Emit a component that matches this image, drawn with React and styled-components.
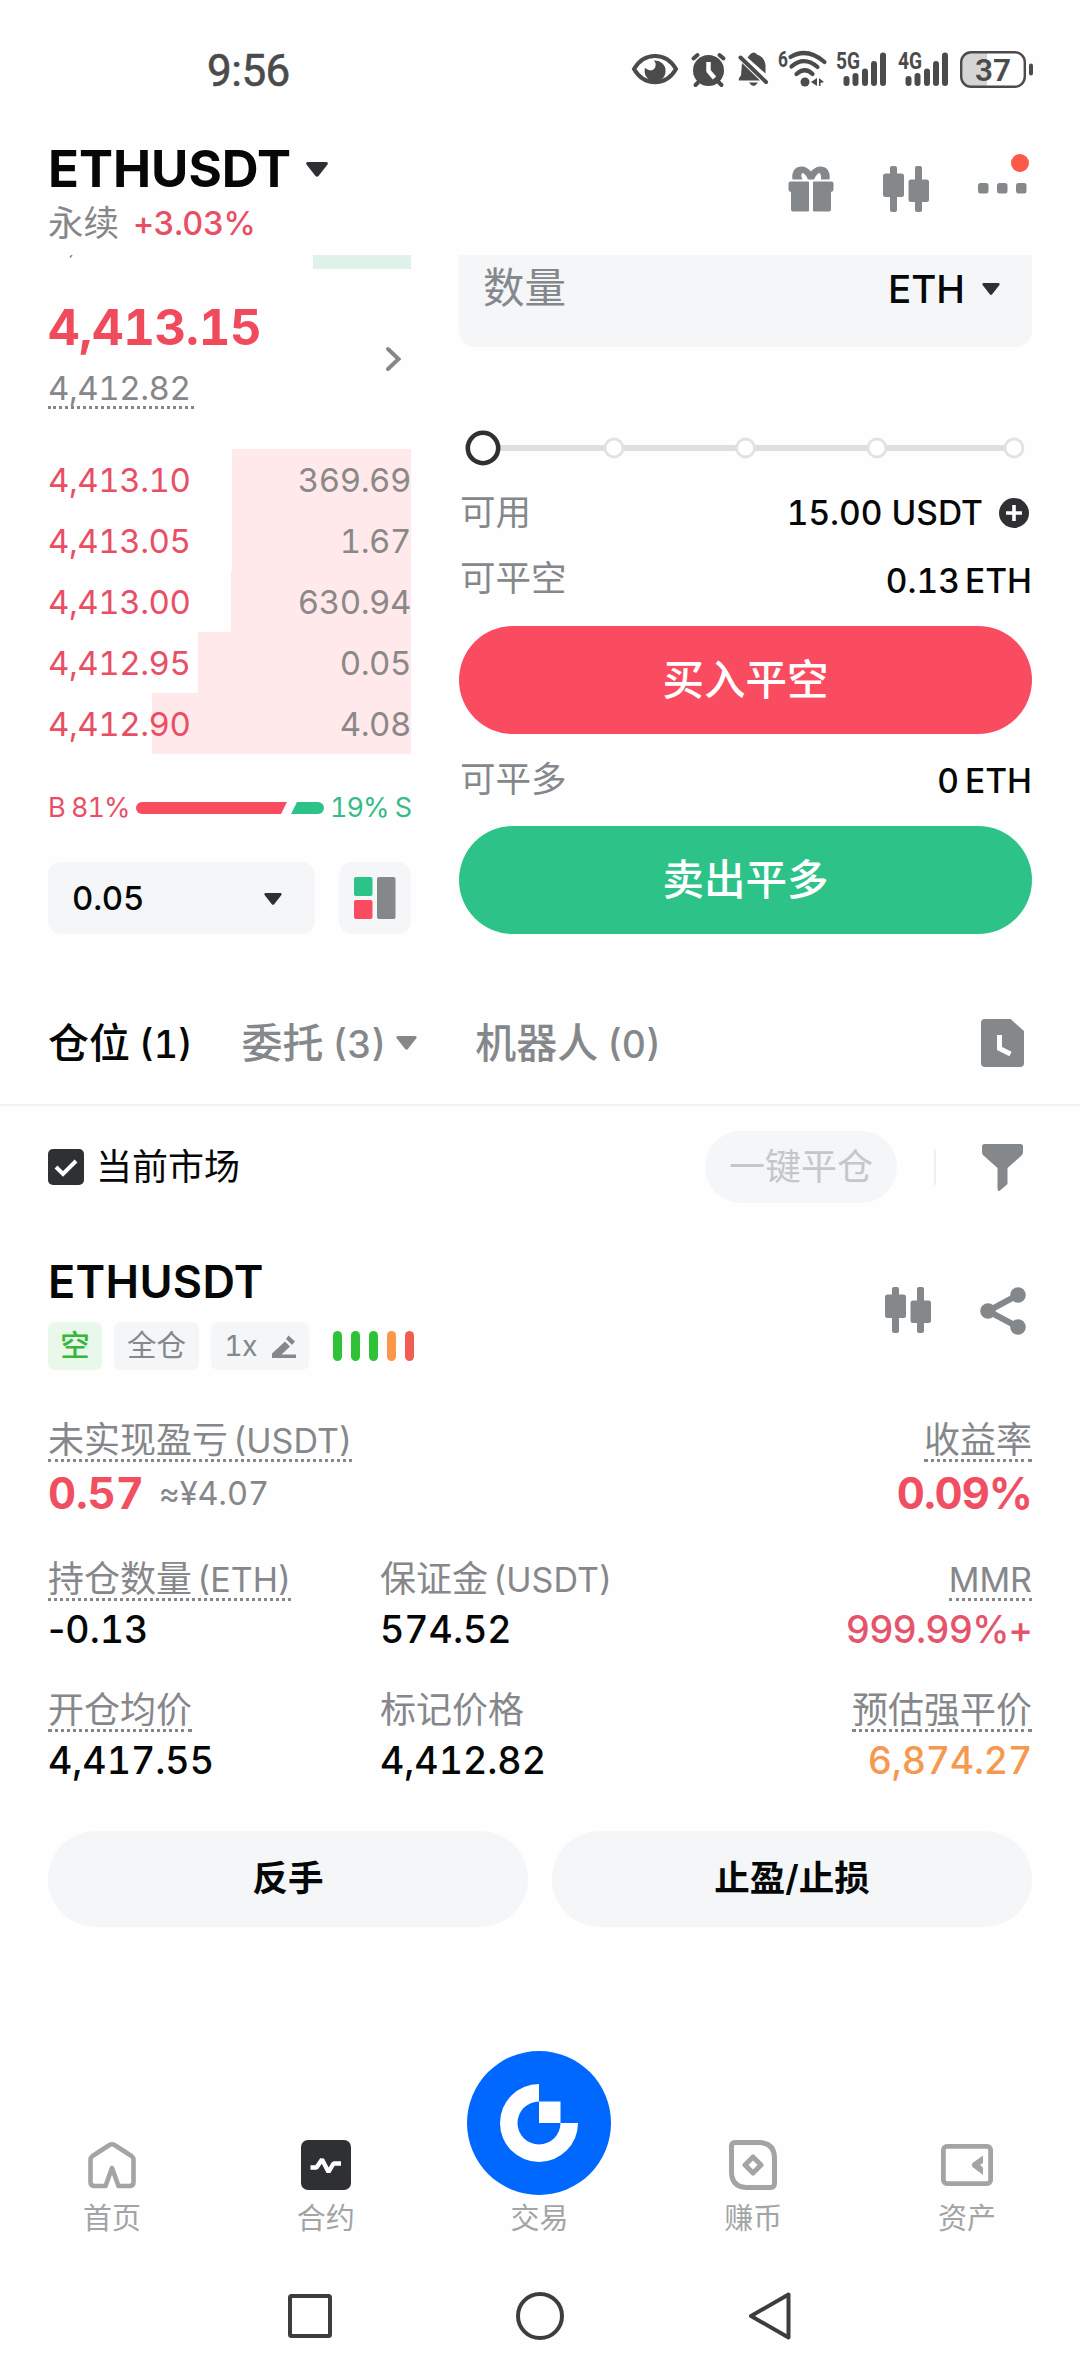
import React from "react";
import styled, { createGlobalStyle } from "styled-components";

const c = {
  red: "#f94c60",
  redText: "#e94f64",
  green: "#2dc388",
  gray: "#85888b",
  grayText: "#85878a",
  dark: "#2f3033",
  panel: "#f4f6f8",
  status: "#4b4b4b",
  nav: "#a2a4a6",
};

const Global = createGlobalStyle`
  * { box-sizing: border-box; }
  body { margin: 0; background: #fefefe; }
`;

const Screen = styled.div`
  width: 1080px;
  height: 2376px;
  display: flex;
  flex-direction: column;
  overflow: hidden;
  background: #fefefe;
  color: #060707;
  font-family: Inter, "Noto Sans CJK SC", sans-serif;
  font-variant-numeric: tabular-nums;
  line-height: 1.2;
  white-space: nowrap;
`;

/* ---------- status bar ---------- */
const StatusBar = styled.div`
  height: 138px;
  padding: 0 47px 0 207px;
  display: flex;
  align-items: center;
  justify-content: space-between;
  color: ${c.status};
`;
const Clock = styled.div`
  font: 400 44px/50px Roboto, sans-serif;
  letter-spacing: -0.5px;
  padding-top: 4px;
  -webkit-text-stroke: 0.6px ${c.status};
`;
const StatusIcons = styled.div`
  display: flex;
  align-items: center;
  svg { display: block; overflow: visible; }
`;
const Gap = styled.span`
  width: ${(p) => p.$w}px;
`;

/* ---------- header ---------- */
const Header = styled.header`
  height: 117px;
  padding: 4px 48px 0;
  display: flex;
  justify-content: space-between;
`;
const Stack = styled.div`
  display: flex;
  flex-direction: column;
  gap: ${(p) => p.$gap || 0}px;
`;
const Pair = styled.div`
  display: flex;
  align-items: center;
  height: 54px;
  gap: 15px;
`;
const Symbol = styled.h1`
  margin: 0;
  font-size: 51px;
  line-height: 54px;
  font-weight: 700;
`;
const Change = styled.div`
  display: flex;
  align-items: center;
  gap: 14px;
  height: 40px;
  font-size: 35.5px;
  color: ${c.grayText};
`;
const Contract = styled.span`
  padding-top: 2px;
`;
const Percent = styled.span`
  font-size: 32.5px;
  font-weight: 500;
  letter-spacing: -0.5px;
  color: ${c.redText};
`;
const HeaderIcons = styled.div`
  display: flex;
  align-items: flex-start;
  svg { display: block; }
`;

/* ---------- trade area ---------- */
const Trade = styled.section`
  display: grid;
  grid-template-columns: 363px 573px;
  gap: 48px;
  padding: 0 48px;
  height: 679px;
`;
const Column = styled.div`
  display: flex;
  flex-direction: column;
`;
const ClippedRow = styled.div`
  height: 14px;
  display: flex;
  justify-content: space-between;
  align-items: flex-start;
`;
const BidDepth = styled.div`
  width: 98px;
  height: 14px;
  background: #e0f3ea;
`;
const PriceRow = styled.div`
  height: 180px;
  display: flex;
  justify-content: space-between;
  align-items: center;
  padding-right: 9px;
`;
const PriceStack = styled.div`
  align-self: flex-start;
  padding-top: 34px;
  display: flex;
  flex-direction: column;
  align-items: flex-start;
  gap: 18px;
`;
const LastPrice = styled.div`
  font-size: 49px;
  line-height: 50px;
  font-weight: 700;
  letter-spacing: -0.4px;
  color: #f04a5d;
`;
const MarkPrice = styled.div`
  font-size: 33px;
  line-height: 35px;
  letter-spacing: -0.45px;
  color: ${c.grayText};
  border-bottom: 3px dotted ${c.gray};
  padding-right: 3px;
`;
const BookRow = styled.div`
  height: 61px;
  padding-top: 2px;
  display: flex;
  justify-content: space-between;
  align-items: center;
  font-size: 33px;
  letter-spacing: -0.45px;
  background: linear-gradient(#ffe9ea, #ffe9ea) right / ${(p) => p.$depth}px 100% no-repeat;
`;
const AskPrice = styled.span`
  color: ${c.redText};
`;
const Amount = styled.span`
  color: #8a8889;
`;
const Ratio = styled.div`
  height: 108px;
  display: flex;
  align-items: center;
  justify-content: space-between;
  font-size: 27px;
  svg { display: block; }
`;
const RatioText = styled.span`
  color: ${(p) => p.$color};
  letter-spacing: -1px;
`;
const Controls = styled.div`
  display: flex;
  justify-content: space-between;
  height: 72px;
`;
const Select = styled.div`
  width: 267px;
  padding: 2px 33px 0 24px;
  border-radius: 13px;
  background: ${c.panel};
  display: flex;
  align-items: center;
  justify-content: space-between;
  font-size: 33px;
  letter-spacing: -0.2px;
  font-weight: 500;
`;
const SquareButton = styled.div`
  width: 72px;
  border-radius: 13px;
  background: ${c.panel};
  display: flex;
  align-items: center;
  justify-content: center;
`;
const QtyInput = styled.div`
  height: 92px;
  padding: 0 32px 24px 24px;
  border-radius: 0 0 16px 16px;
  background: ${c.panel};
  display: flex;
  align-items: center;
  justify-content: space-between;
  font-size: 41.5px;
  color: ${c.gray};
`;
const Unit = styled.span`
  display: flex;
  align-items: center;
  gap: 17px;
  font-size: 38.5px;
  font-weight: 500;
  color: #060707;
`;
const SliderWrap = styled.div`
  height: 133px;
  padding: 83px 0 14px;
  svg { display: block; }
`;
const InfoRow = styled.div`
  height: ${(p) => p.$h}px;
  padding-left: 1px;
  display: flex;
  align-items: center;
  justify-content: space-between;
  font-size: 35.5px;
  color: ${c.gray};
`;
const InfoValue = styled.span`
  display: flex;
  align-items: center;
  gap: 16px;
  padding-top: ${(p) => p.$drop || 0}px;
  padding-right: ${(p) => p.$pad || 0}px;
  font-size: 33.5px;
  font-weight: 500;
  word-spacing: ${(p) => p.$ws || 0}px;
  color: #060707;
`;
const OrderButton = styled.div`
  height: 108px;
  padding-top: 1px;
  border-radius: 54px;
  margin-top: ${(p) => p.$mt || 0}px;
  background: ${(p) => p.$bg};
  color: #fff;
  font-size: 41.5px;
  font-weight: 500;
  display: flex;
  align-items: center;
  justify-content: center;
`;

/* ---------- tabs ---------- */
const Tabs = styled.nav`
  margin-top: 48px;
  height: 124px;
  padding: 0 48px;
  border-bottom: 2px solid #f1f2f3;
  display: flex;
  align-items: center;
`;
const Tab = styled.div`
  display: flex;
  align-items: baseline;
  gap: 9px;
  padding-top: 1px;
  margin-right: ${(p) => p.$mr || 0}px;
  font-size: 41px;
  font-weight: 500;
  color: ${(p) => (p.$active ? "#060707" : c.gray)};
`;
const Count = styled.span`
  font-size: 37.5px;
`;
const Push = styled.span`
  flex: 1;
`;
const FilterRow = styled.div`
  height: 122px;
  padding: 0 57px 0 48px;
  display: flex;
  align-items: center;
`;
const CheckLabel = styled.span`
  margin-left: 12px;
  padding-top: 2px;
  font-size: 36px;
`;
const CloseAll = styled.div`
  width: 192px;
  height: 72px;
  padding-top: 2px;
  border-radius: 36px;
  background: ${c.panel};
  color: #c3c7ca;
  font-size: 36px;
  display: flex;
  align-items: center;
  justify-content: center;
`;
const Separator = styled.span`
  width: 2px;
  height: 36px;
  margin: 0 46px 0 37px;
  background: #eef0f1;
`;

/* ---------- position ---------- */
const Position = styled.section`
  padding: 30px 48px 0;
`;
const PositionHead = styled.div`
  display: flex;
  justify-content: space-between;
`;
const PositionName = styled.h2`
  margin: 0;
  font-size: 45px;
  line-height: 48px;
  font-weight: 600;
  letter-spacing: 0.3px;
`;
const Tags = styled.div`
  display: flex;
  align-items: center;
  gap: 12px;
`;
const Tag = styled.span`
  width: ${(p) => p.$w}px;
  height: 48px;
  border-radius: 7px;
  display: flex;
  align-items: center;
  justify-content: center;
  gap: 15px;
  font-size: ${(p) => p.$fs || 29.5}px;
  letter-spacing: ${(p) => p.$ls || 0}px;
  font-weight: ${(p) => (p.$short ? 500 : 400)};
  color: ${(p) => (p.$short ? "#35b83c" : c.gray)};
  background: ${(p) => (p.$short ? "#e9f8ea" : c.panel)};
`;
const Levels = styled.span`
  display: flex;
  gap: 9px;
  margin-left: 12px;
`;
const Level = styled.i`
  width: 9px;
  height: 30px;
  border-radius: 5px;
  background: ${(p) => p.$color};
`;
const PositionIcons = styled.div`
  display: flex;
  gap: 49px;
  padding: 29px 6px 0 0;
  svg { display: block; }
`;
const Metrics = styled.div`
  display: grid;
  grid-template-columns: 332px 1fr auto;
  margin-top: ${(p) => p.$mt}px;
`;
const Metric = styled.div`
  display: flex;
  flex-direction: column;
  align-items: ${(p) => (p.$right ? "flex-end" : "flex-start")};
  gap: ${(p) => p.$gap || 6}px;
`;
const Label = styled.div`
  display: flex;
  align-items: baseline;
  gap: 5px;
  height: 42px;
  line-height: 41px;
  font-size: 36px;
  color: ${c.grayText};
  border-bottom: 3px dotted ${(p) => (p.$plain ? "transparent" : c.gray)};
`;
const LabelUnit = styled.span`
  font-size: 34px;
`;
const Value = styled.div`
  height: 44px;
  display: flex;
  align-items: center;
  gap: 15px;
  font-size: ${(p) => (p.$big ? 43.5 : 37.5)}px;
  font-weight: ${(p) => (p.$big ? 700 : 500)};
  letter-spacing: ${(p) => p.$ls || 0}px;
  color: ${(p) => p.$color || "#060707"};
`;
const Minus = styled.span`
  font-variant-numeric: normal;
  margin-right: -15px;
`;
const Approx = styled.span`
  font-size: 32.5px;
  font-weight: 400;
  color: ${c.grayText};
`;
const Actions = styled.div`
  display: grid;
  grid-template-columns: 1fr 1fr;
  gap: 24px;
  margin-top: 49px;
`;
const Action = styled.div`
  height: 96px;
  padding-top: 1px;
  border-radius: 48px;
  background: ${c.panel};
  display: flex;
  align-items: center;
  justify-content: center;
  font-size: 35.5px;
  font-weight: 600;
`;

/* ---------- bottom ---------- */
const TabBar = styled.nav`
  display: grid;
  grid-template-columns: repeat(5, 1fr);
  align-items: end;
  padding: 0 6px 0 5px;
`;
const NavItem = styled.div`
  display: flex;
  flex-direction: column;
  align-items: center;
  font-size: 29px;
  line-height: 44px;
  color: ${c.nav};
  svg { display: block; margin-bottom: ${(p) => (p.$main ? 2 : 7)}px; }
`;
const SystemNav = styled.div`
  height: 135px;
  padding: 15px 1px 0 0;
  display: flex;
  justify-content: center;
  align-items: center;
  gap: 180px;
`;

/* ---------- icons ---------- */
const Caret = ({ w, h, color = c.dark }) => (
  <svg width={w} height={h} viewBox="0 0 22 15">
    <path d="M1.5 0h19q2 .5 1 2.500l-9 11.500q-1.500 1.500-3 0l-9-11.500q-1-2 1-2.500z" fill={color} />
  </svg>
);
const EyeIcon = () => (
  <svg width="46" height="32" viewBox="0 0 46 32">
    <path d="M2 16C12-1.500 34-1.500 44 16 34 33.500 12 33.500 2 16z" fill="none" stroke={c.status} strokeWidth="4" />
    <path d="M22 7.500a10.500 10.500 0 1 1-9 7.500q6 4.500 9.500.5 2.500-4-.5-8z" fill={c.status} />
  </svg>
);
const AlarmIcon = () => (
  <svg width="35" height="35" viewBox="0 0 35 35" fill="none" stroke={c.status} strokeWidth="4" strokeLinecap="round">
    <circle cx="17.500" cy="18.500" r="15.500" fill={c.status} stroke="none" />
    <path d="M2.500 6.500 6.500 3M32.500 6.500 28.500 3M7 30.500 4.500 33M28 30.500 30.500 33" />
    <path d="M17.500 10v9l6 7" stroke="#fefefe" strokeWidth="4.500" strokeLinecap="butt" strokeLinejoin="round" />
  </svg>
);
const MutedBellIcon = () => (
  <svg width="30" height="35" viewBox="0 0 30 35">
    <path d="M12 2.500q4-4 7 0 8 3 8.500 11v8L9.500 5.500z" fill={c.status} />
    <path d="M4 11 22 28.500H1q-1-2 2-5z" fill={c.status} />
    <path d="M11 30.500h9q-4.500 7-9 0z" fill={c.status} />
    <path d="M2.500 5.500 28 30" stroke={c.status} strokeWidth="4" strokeLinecap="round" />
  </svg>
);
const WifiIcon = () => (
  <svg width="49" height="36" viewBox="0 0 49 36" fill="none" stroke={c.status} strokeWidth="4.200">
    <text x="0" y="16" fontFamily="Roboto, sans-serif" fontSize="22" fontWeight="700" fill={c.status} stroke="none" textLength="10" lengthAdjust="spacingAndGlyphs">6</text>
    <path d="M12.500 6Q29-4 46.500 11" strokeLinecap="round" />
    <path d="M13.500 15.500Q26 4.500 39.500 16" strokeLinecap="round" />
    <path d="M18.500 23Q27 15.500 34.500 23" strokeLinecap="round" />
    <circle cx="27" cy="31" r="4.500" fill={c.status} stroke="none" />
    <path d="M39 27v8l-6-4zM41 27l5 4-3.500 1V35H41z" fill={c.status} stroke="none" />
  </svg>
);
const SignalIcon = ({ label }) => (
  <svg width="50" height="36" viewBox="0 0 50 36">
    <text x="0" y="17.500" fontFamily="Roboto, sans-serif" fontSize="23" fontWeight="700" fill={c.status} textLength="24" lengthAdjust="spacingAndGlyphs">
      {label}
    </text>
    <g fill={c.status}>
      <rect x="7.500" y="25" width="6" height="10" rx="3" />
      <rect x="16.500" y="22" width="6" height="13" rx="3" />
      <rect x="26" y="17.500" width="6" height="17.500" rx="3" />
      <rect x="35" y="10" width="6" height="25" rx="3" />
      <rect x="44" y="1.500" width="6" height="33.500" rx="3" />
    </g>
  </svg>
);
const BatteryIcon = () => (
  <svg width="73" height="37" viewBox="0 0 73 37">
    <path d="M12 2h15v33H12Q2 35 2 25V12Q2 2 12 2z" fill="#d5d5d5" />
    <rect x="1.200" y="1.200" width="63.600" height="34.600" rx="10" fill="none" stroke={c.status} strokeWidth="2.400" />
    <rect x="69" y="12.500" width="4" height="12" rx="2" fill={c.status} />
    <text x="33" y="30" fontFamily="Roboto, sans-serif" fontSize="32" fontWeight="600" fill={c.status} textAnchor="middle" textLength="36" lengthAdjust="spacingAndGlyphs">
      37
    </text>
  </svg>
);
const GiftIcon = () => (
  <svg width="46" height="46" viewBox="0 0 46 46" fill={c.gray}>
    <path d="M4.500 13.500C3 5 8 .5 13.500.5c4 0 7 2 9.500 5 2.500-3 5.500-5 9.500-5C38 .5 43 5 41.500 13.500H33q.5-5-1.500-6.500-2.500 0-5.500 6.500h-6Q17 7 14.500 7q-2.500 1.500 0 6.500z" />
    <path d="M2.500 15.500h17.500q1 0 1 1v28q0 1-1 1H5q-2 0-2-2V26q-2.500-.5-2.500-2.500v-6q0-2 2-2zM43.500 15.500H26q-1 0-1 1v28q0 1 1 1h15q2 0 2-2V26q2.500-.5 2.500-2.500v-6q0-2-2-2z" />
  </svg>
);
const CandlesIcon = () => (
  <svg width="46" height="46" viewBox="0 0 46 46" fill={c.gray}>
    <rect x="7" y="0" width="7" height="46" rx="2" />
    <rect x="0" y="7.500" width="21" height="23.500" rx="2.500" />
    <rect x="32" y="0" width="7" height="46" rx="2" />
    <rect x="25.500" y="13.500" width="20.500" height="22.500" rx="2.500" />
  </svg>
);
const MoreIcon = () => (
  <svg width="52" height="50" viewBox="0 0 52 50">
    <g fill={c.gray}>
      <rect x="0" y="29" width="10.500" height="10.500" rx="2.500" />
      <rect x="19" y="29" width="10.500" height="10.500" rx="2.500" />
      <rect x="38" y="29" width="10.500" height="10.500" rx="2.500" />
    </g>
    <circle cx="42" cy="9" r="9" fill="#fb5a49" />
  </svg>
);
const ShareIcon = () => (
  <svg width="46" height="48" viewBox="0 0 46 48">
    <path d="M38 8 8 24 38 40" fill="none" stroke={c.gray} strokeWidth="6" />
    <g fill={c.gray}>
      <circle cx="38" cy="8" r="7.800" />
      <circle cx="8" cy="24" r="7.800" />
      <circle cx="38" cy="40" r="7.800" />
    </g>
  </svg>
);

const asks = [
  ["4,413.10", "369.69", 179],
  ["4,413.05", "1.67", 179],
  ["4,413.00", "630.94", 180],
  ["4,412.95", "0.05", 213],
  ["4,412.90", "4.08", 259],
];

export default function App() {
  return (
    <Screen>
      <Global />
      <StatusBar>
        <Clock>9:56</Clock>
        <StatusIcons>
          <EyeIcon />
          <Gap $w={13} />
          <AlarmIcon />
          <Gap $w={12} />
          <MutedBellIcon />
          <Gap $w={10} />
          <WifiIcon />
          <Gap $w={9} />
          <SignalIcon label="5G" />
          <Gap $w={12} />
          <SignalIcon label="4G" />
          <Gap $w={12} />
          <BatteryIcon />
        </StatusIcons>
      </StatusBar>

      <Header>
        <Stack $gap={7}>
          <Pair>
            <Symbol>ETHUSDT</Symbol>
            <Caret w={22} h={15} />
          </Pair>
          <Change>
            <Contract>永续</Contract>
            <Percent>+3.03%</Percent>
          </Change>
        </Stack>
        <HeaderIcons>
          <svg width="46" height="70" viewBox="0 0 46 70"><g transform="translate(0 24)"><GiftIcon /></g></svg>
          <Gap $w={49} />
          <svg width="46" height="70" viewBox="0 0 46 70"><g transform="translate(0 24)"><CandlesIcon /></g></svg>
          <Gap $w={49} />
          <svg width="54" height="70" viewBox="0 0 54 70"><g transform="translate(0 12)"><MoreIcon /></g></svg>
        </HeaderIcons>
      </Header>

      <Trade>
        <Column>
          <ClippedRow>
            <svg width="30" height="4" viewBox="0 0 30 4">
              <path d="M22 2.500 24 0" stroke="#7c8a88" strokeWidth="1.500" />
            </svg>
            <BidDepth />
          </ClippedRow>
          <PriceRow>
            <PriceStack>
              <LastPrice>4,413.15</LastPrice>
              <MarkPrice>4,412.82</MarkPrice>
            </PriceStack>
            <svg width="17" height="26" viewBox="0 0 17 26">
              <path d="M3 3 13.500 13 3 23" fill="none" stroke={c.gray} strokeWidth="4" strokeLinecap="round" />
            </svg>
          </PriceRow>
          {asks.map(([price, amount, depth]) => (
            <BookRow key={price} $depth={depth}>
              <AskPrice>{price}</AskPrice>
              <Amount>{amount}</Amount>
            </BookRow>
          ))}
          <Ratio>
            <RatioText $color={c.redText}>B 81%</RatioText>
            <svg width="188" height="12" viewBox="0 0 188 12">
              <path d="M6 0h145l-6 12H6A6 6 0 0 1 6 0z" fill={c.red} />
              <path d="M161 0h21a6 6 0 0 1 0 12h-27z" fill={c.green} />
            </svg>
            <RatioText $color="#35bb87">19% S</RatioText>
          </Ratio>
          <Controls>
            <Select>
              0.05
              <Caret w={18} h={12} />
            </Select>
            <SquareButton>
              <svg width="42" height="42" viewBox="0 0 42 42">
                <rect width="18.500" height="19" rx="2" fill={c.green} />
                <rect y="23" width="18.500" height="19" rx="2" fill={c.red} />
                <rect x="23" width="18.500" height="42" rx="2" fill={c.gray} />
              </svg>
            </SquareButton>
          </Controls>
        </Column>

        <Column>
          <QtyInput>
            数量
            <Unit>
              ETH
              <Caret w={18} h={12} />
            </Unit>
          </QtyInput>
          <SliderWrap>
            <svg width="573" height="36" viewBox="0 0 573 36">
              <path d="M24 18H555" stroke="#dddfdf" strokeWidth="6" />
              {[155, 286.5, 418, 555].map((x) => (
                <circle key={x} cx={x} cy="18" r="9" fill="#fff" stroke="#e1e3e3" strokeWidth="2.800" />
              ))}
              <circle cx="24" cy="18" r="15.200" fill="#fff" stroke={c.dark} strokeWidth="4.600" />
            </svg>
          </SliderWrap>
          <InfoRow $h={66}>
            可用
            <InfoValue $pad={3}>
              15.00 USDT
              <svg width="30" height="30" viewBox="0 0 30 30">
                <circle cx="15" cy="15" r="15" fill={c.dark} />
                <path d="M15 7v16M7 15h16" stroke="#fff" strokeWidth="3.600" />
              </svg>
            </InfoValue>
          </InfoRow>
          <InfoRow $h={66}>
            可平空<InfoValue $drop={5} $ws={-4}>0.13 ETH</InfoValue>
          </InfoRow>
          <OrderButton $bg={c.red} $mt={14}>买入平空</OrderButton>
          <InfoRow $h={92}>
            可平多<InfoValue $drop={3} $ws={-3}>0 ETH</InfoValue>
          </InfoRow>
          <OrderButton $bg={c.green}>卖出平多</OrderButton>
        </Column>
      </Trade>

      <Tabs>
        <Tab $active $mr={49}>
          仓位<Count>(1)</Count>
        </Tab>
        <Tab $mr={10}>
          委托<Count>(3)</Count>
        </Tab>
        <Caret w={21} h={14} color={c.gray} />
        <Gap $w={58} />
        <Tab>
          机器人<Count>(0)</Count>
        </Tab>
        <Push />
        <svg width="51" height="48" viewBox="0 0 51 48">
          <path d="M4 0h25.500l13.500 12V44q0 4-4 4H4q-4 0-4-4V4Q0 0 4 0z" fill={c.gray} />
          <path d="M18.500 16v13.500l11 5.500" fill="none" stroke="#fff" strokeWidth="5" />
        </svg>
      </Tabs>

      <FilterRow>
        <svg width="36" height="36" viewBox="0 0 36 36">
          <rect width="36" height="36" rx="5" fill={c.dark} />
          <path d="M8 18 15 25 28 12" fill="none" stroke="#fff" strokeWidth="4" />
        </svg>
        <CheckLabel>当前市场</CheckLabel>
        <Push />
        <CloseAll>一键平仓</CloseAll>
        <Separator />
        <svg width="41" height="47" viewBox="0 0 41 47">
          <path d="M2.500 0h36q2.500 0 2.500 2.500V8q0 2-1.500 3.500L25.500 24V40l-8 7q-2 0-2-2V24L1.500 11.500Q0 10 0 8V2.500Q0 0 2.500 0z" fill={c.gray} />
        </svg>
      </FilterRow>

      <Position>
        <PositionHead>
          <Stack $gap={16}>
            <PositionName>ETHUSDT</PositionName>
            <Tags>
              <Tag $short $w={54}>空</Tag>
              <Tag $w={85}>全仓</Tag>
              <Tag $w={98} $ls={-0.7} $fs={28.5}>
                1x
                <svg width="24" height="23" viewBox="0 0 24 23" fill={c.gray}>
                  <path d="M13 6.500 18 11.500 9.500 19.500H24V23H0V18.500z" />
                  <path d="M16.500.5 23 6.500 20 10 14 4z" />
                </svg>
              </Tag>
              <Levels>
                {["#30c236", "#30c236", "#30c236", "#fb964a", "#f05e52"].map((color, i) => (
                  <Level key={i} $color={color} />
                ))}
              </Levels>
            </Tags>
          </Stack>
          <PositionIcons>
            <CandlesIcon />
            <ShareIcon />
          </PositionIcons>
        </PositionHead>

        <Metrics $mt={50}>
          <Metric $gap={9}>
            <Label>
              未实现盈亏<LabelUnit>(USDT)</LabelUnit>
            </Label>
            <Value $big $color="#f04f62" $ls={-0.1}>
              0.57<Approx>≈¥4.07</Approx>
            </Value>
          </Metric>
          <span />
          <Metric $right $gap={9}>
            <Label>收益率</Label>
            <Value $big $color="#f04f62" $ls={-1}>0.09%</Value>
          </Metric>
        </Metrics>
        <Metrics $mt={44}>
          <Metric>
            <Label>
              持仓数量<LabelUnit>(ETH)</LabelUnit>
            </Label>
            <Value>
              <Minus>-</Minus>0.13
            </Value>
          </Metric>
          <Metric>
            <Label $plain>
              保证金<LabelUnit>(USDT)</LabelUnit>
            </Label>
            <Value>574.52</Value>
          </Metric>
          <Metric $right>
            <Label>
              <LabelUnit>MMR</LabelUnit>
            </Label>
            <Value $color="#e4546b" $ls={-0.85}>999.99%+</Value>
          </Metric>
        </Metrics>
        <Metrics $mt={39}>
          <Metric>
            <Label>开仓均价</Label>
            <Value>4,417.55</Value>
          </Metric>
          <Metric>
            <Label $plain>标记价格</Label>
            <Value>4,412.82</Value>
          </Metric>
          <Metric $right>
            <Label>预估强平价</Label>
            <Value $color="#f5994f" $ls={-0.2}>6,874.27</Value>
          </Metric>
        </Metrics>
        <Actions>
          <Action>反手</Action>
          <Action>止盈/止损</Action>
        </Actions>
      </Position>

      <Push />

      <TabBar>
        <NavItem>
          <svg width="50" height="50" viewBox="0 0 50 50">
            <path d="M18.500 46H7.500Q3.500 46 3.500 42V19.500Q3.500 17.500 5.500 16L22.500 5Q25 3.500 27.500 5L44.500 16Q46.500 17.500 46.500 19.500V42Q46.500 46 42.500 46H31.500L25 28z" fill="none" stroke={c.nav} strokeWidth="4.600" strokeLinejoin="round" />
          </svg>
          首页
        </NavItem>
        <NavItem>
          <svg width="50" height="50" viewBox="0 0 50 50">
            <rect width="50" height="50" rx="7" fill={c.dark} />
            <path d="M9.500 27.500h6L21 19.500 27.500 32 32.500 23.500H40" fill="none" stroke="#fff" strokeWidth="4.400" strokeLinejoin="bevel" />
          </svg>
          合约
        </NavItem>
        <NavItem $main>
          <svg width="144" height="144" viewBox="0 0 144 144">
            <circle cx="72" cy="72" r="72" fill="#0068ff" />
            <path d="M72 33A39 39 0 1 0 111 72H93.500A21.500 21.500 0 1 1 72 50.500z" fill="#fff" />
            <rect x="72" y="50.500" width="21.500" height="21.500" fill="#fff" />
          </svg>
          交易
        </NavItem>
        <NavItem>
          <svg width="50" height="50" viewBox="0 0 50 50" fill="none" stroke={c.nav} strokeWidth="5" strokeLinejoin="round">
            <path d="M7 2.500H32Q46.500 3.500 46.500 18V43.500Q46.500 47.500 42.500 47.500H18Q3.500 46.500 3.500 32V6.500Q3.500 2.500 7 2.500z" />
            <path d="M25 17 33 25 25 33 17 25z" />
          </svg>
          赚币
        </NavItem>
        <NavItem>
          <svg width="52" height="50" viewBox="0 0 52 50" fill="none" stroke={c.nav} strokeWidth="4.800">
            <rect x="2.400" y="6.400" width="47.200" height="37.200" rx="3.500" />
            <path d="M42 15.500v7.500L39 25 42 27.500V35L31.500 27q-1.500-2 0-4z" fill={c.nav} stroke="none" />
          </svg>
          资产
        </NavItem>
      </TabBar>

      <SystemNav>
        <svg width="50" height="50" viewBox="0 0 50 50">
          <rect x="5" y="5" width="40" height="40" rx="1.500" fill="none" stroke="#3d3d3d" strokeWidth="4" />
        </svg>
        <svg width="50" height="50" viewBox="0 0 50 50">
          <circle cx="25" cy="25" r="22" fill="none" stroke="#3d3d3d" strokeWidth="4" />
        </svg>
        <svg width="50" height="50" viewBox="0 0 50 50">
          <path d="M43.500 3.500V46.500L6 25z" fill="none" stroke="#3d3d3d" strokeWidth="4" strokeLinejoin="round" />
        </svg>
      </SystemNav>
    </Screen>
  );
}
